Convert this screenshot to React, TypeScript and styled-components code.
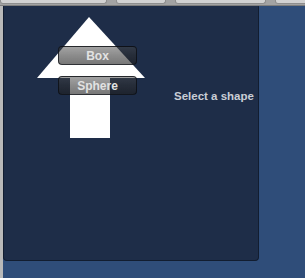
import React from "react";
import styled, { createGlobalStyle } from "styled-components";

const Global = createGlobalStyle`
  html, body { margin: 0; padding: 0; background: #2f4d79; }
  body { width: 305px; height: 278px; overflow: hidden; font-family: "Liberation Sans", Arial, sans-serif; }
`;

const Screen = styled.div`
  width: 305px;
  height: 278px;
  display: grid;
  grid-template-rows: 6px 1fr;
  grid-template-columns: 3px 1fr;
  background: #2f4d79;
`;

const TabStrip = styled.div`
  grid-column: 1 / 3;
  display: flex;
  align-items: flex-start;
  gap: 9px;
  background: #a3a3a3;
  border-bottom: 1px solid #7d7d7d;
  box-sizing: border-box;
`;

const Tab = styled.div<{ $w: number }>`
  width: ${(p) => p.$w}px;
  height: 4px;
  flex: none;
  box-sizing: border-box;
  background: #d2d2d2;
  border: 1px solid #8e8e8e;
  border-top: none;
  border-radius: 0 0 3px 3px;
`;

const SideStrip = styled.div`
  background: #b9b9b9;
`;

const Workspace = styled.div`
  display: flex;
  align-items: flex-start;
`;

const Panel = styled.div`
  position: relative;
  width: 256px;
  height: 255px;
  box-sizing: border-box;
  background: #1e2d48;
  border: 1px solid #121d30;
  border-top-color: #1e2d48;
  border-radius: 0 0 4px 4px;
  display: flex;
  align-items: flex-start;
  padding: 39px 0 0 54px;
  overflow: hidden;
`;

const Drawing = styled.svg`
  position: absolute;
  left: 0;
  top: 0;
  width: 256px;
  height: 255px;
  pointer-events: none;
`;

const ButtonColumn = styled.div`
  position: relative;
  display: flex;
  flex-direction: column;
  gap: 11px;
`;

const ShapeButton = styled.button`
  width: 79px;
  height: 19px;
  box-sizing: border-box;
  padding: 0;
  border: 1px solid rgba(10, 12, 18, 0.75);
  border-radius: 4px;
  background: linear-gradient(
    to bottom,
    rgba(70, 70, 70, 0.5) 0%,
    rgba(45, 45, 45, 0.55) 50%,
    rgba(30, 30, 30, 0.6) 100%
  );
  color: #e2e2e2;
  font-family: "Liberation Sans", Arial, sans-serif;
  font-weight: bold;
  font-size: 12px;
  line-height: 18px;
  text-align: center;
`;

const Label = styled.div`
  position: relative;
  margin: 43px 0 0 37px;
  color: #c9cdd6;
  font-weight: bold;
  font-size: 11.5px;
  line-height: 14px;
  white-space: nowrap;
`;

export default function App() {
  return (
    <>
      <Global />
      <Screen>
        <TabStrip>
          <Tab $w={107} />
          <Tab $w={50} />
          <Tab $w={91} />
          <Tab $w={40} />
        </TabStrip>
        <SideStrip />
        <Workspace>
          <Panel>
            <Drawing viewBox="0 0 256 255">
              <polygon points="85,10 33,71 141,71" fill="#ffffff" />
              <rect x="66" y="71" width="40" height="60" fill="#ffffff" />
            </Drawing>
            <ButtonColumn>
              <ShapeButton>Box</ShapeButton>
              <ShapeButton>Sphere</ShapeButton>
            </ButtonColumn>
            <Label>Select a shape</Label>
          </Panel>
        </Workspace>
      </Screen>
    </>
  );
}
